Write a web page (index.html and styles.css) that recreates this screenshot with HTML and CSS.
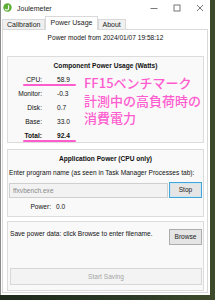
FILE: index.html
```html
<!DOCTYPE html>
<html>
<head>
<meta charset="utf-8">
<link rel="stylesheet" href="styles.css">
</head>
<body>
<div class="window">
  <div class="titlebar">
    <svg class="appicon" width="9" height="9" viewBox="0 0 9 9"><circle cx="4.5" cy="4.5" r="4.2" fill="#5fae3a"/><path d="M5.6 2.2 L5.6 5.2 Q5.6 7 3.9 7 Q2.6 7 2.4 5.8" fill="none" stroke="#fff" stroke-width="1.1"/></svg>
    <span class="title">Joulemeter</span>
    <div class="controls">
      <svg width="8" height="8" viewBox="0 0 8 8"><path d="M0.5 4.5 H7.5" stroke="#555" stroke-width="0.8"/></svg>
      <svg width="8" height="8" viewBox="0 0 8 8"><rect x="1" y="1" width="6" height="6" fill="none" stroke="#555" stroke-width="0.8"/></svg>
      <svg width="8" height="8" viewBox="0 0 8 8"><path d="M1 1 L7 7 M7 1 L1 7" stroke="#555" stroke-width="0.8"/></svg>
    </div>
  </div>
  <div class="tabs">
    <div class="tab">Calibration</div>
    <div class="tab active">Power Usage</div>
    <div class="tab">About</div>
  </div>
  <div class="page">
    <div class="model">Power model from 2024/01/07 19:58:12</div>
    <div class="group g1">
      <div class="heading">Component Power Usage (Watts)</div>
      <div class="rows">
        <div class="row mark"><span class="lbl">CPU:</span><span class="val">58.9</span></div>
        <div class="row"><span class="lbl">Monitor:</span><span class="val">-0.3</span></div>
        <div class="row"><span class="lbl">Disk:</span><span class="val">0.7</span></div>
        <div class="row"><span class="lbl">Base:</span><span class="val">33.0</span></div>
        <div class="row mark"><span class="lbl bold">Total:</span><span class="val bold">92.4</span></div>
      </div>
      <div class="note"><div>FF15ベンチマーク</div><div>計測中の高負荷時の</div><div>消費電力</div></div>
    </div>
    <div class="group g2">
      <div class="heading">Application Power (CPU only)</div>
      <div class="prompt">Enter program name (as seen in Task Manager Processes tab):</div>
      <div class="inputrow">
        <div class="input">ffxvbench.exe</div>
        <div class="btn focus">Stop</div>
      </div>
      <div class="power"><span class="plbl">Power:</span><span>0.0</span></div>
    </div>
    <div class="group g3">
      <div class="saverow">
        <div class="savetext">Save power data: click Browse to enter filename.</div>
        <div class="btn">Browse</div>
      </div>
      <div class="btn wide disabled">Start Saving</div>
    </div>
  </div>
</div>
</body>
</html>
```
FILE: styles.css
```css
html, body { margin: 0; padding: 0; }
body {
  width: 215px; height: 300px; overflow: hidden;
  background: linear-gradient(90deg, #1d2a1c 0%, #2b3a26 60%, #3d4a2a 100%);
  font-family: "Liberation Sans", Arial, sans-serif;
  font-size: 6.6px;
  color: #111;
}
.window {
  width: 210px; height: 295px;
  background: #ffffff;
  display: flex; flex-direction: column;
  box-sizing: border-box;
  border-left: 1px solid #8a8a8a;
}
.titlebar {
  height: 16px; display: flex; align-items: center;
  padding-left: 2px;
}
.appicon { margin-right: 5px; margin-top: -1px; }
.title { font-size: 7px; color: #222; }
.controls { margin-left: auto; display: flex; gap: 15px; margin-right: 6px; }
.tabs {
  height: 13px; display: flex; align-items: flex-end;
  padding-left: 1px; position: relative; z-index: 1;
}
.tab {
  height: 10px; line-height: 10px; padding: 0 4px;
  border: 1px solid #d9d9d9; border-bottom: none;
  background: #f0f0f0; color: #222;
  box-sizing: border-box; font-size: 7px;
}
.tab.active {
  height: 14px; line-height: 12px; background: #ffffff;
  margin-bottom: -1px; padding: 0 4px;
}
.page {
  flex: 1; margin: 0 2px 2px 1px;
  border: 1px solid #d9d9d9;
  background: #ffffff;
  display: flex; flex-direction: column;
  padding: 1px 3px 1px 4px;
}
.model { text-align: center; line-height: 13px; height: 13px; margin-bottom: 12px; }
.group {
  border: 1px solid #dcdcdc; background: #f9f9f9;
  position: relative;
}
.heading { text-align: center; font-weight: bold; line-height: 14px; }
.g1 { height: 87px; box-sizing: border-box; padding-top: 2px; }
.rows { display: flex; flex-direction: column; }
.row { display: flex; line-height: 14px; height: 14px; position: relative; }
.lbl { width: 34px; text-align: right; }
.val { margin-left: 15px; }
.bold { font-weight: bold; }
.row.mark::after {
  content: ""; position: absolute; left: 15px; width: 53px; top: 11px;
  height: 1.5px; background: #ff5ccf; border-radius: 1px;
}
.note {
  position: absolute; left: 76px; top: 17px;
  font-family: "Noto Sans CJK JP", sans-serif; font-weight: 500;
  font-size: 13px; color: #ff5ccf;
  white-space: nowrap;
}
.note div { height: 17.5px; line-height: 17.5px; }
.g2 { margin-top: 6px; height: 68px; box-sizing: border-box; padding: 2px 1px 0 1px; }
.prompt { line-height: 14px; white-space: nowrap; }
.inputrow { display: flex; gap: 1px; margin-top: 2px; align-items: center; }
.input {
  flex: 1; height: 15px; box-sizing: border-box;
  border: 1px solid #cfcfcf; background: #f2f2f2; color: #8a8a8a;
  line-height: 13px; padding-left: 3px;
}
.btn {
  width: 33px; height: 16px; box-sizing: border-box;
  border: 1px solid #adadad; background: #e5e5e5;
  text-align: center; line-height: 14px; color: #222;
}
.btn.focus { border: 1px solid #42a7d8; box-shadow: inset 0 0 0 1px #cfe6f2; }
.power { line-height: 14px; margin-top: 2px; display: flex; }
.plbl { width: 42px; text-align: right; margin-right: 5px; }
.g3 { margin-top: 4px; height: 70px; box-sizing: border-box; padding: 7px 1px 0 2px; display: flex; flex-direction: column; }
.saverow { display: flex; justify-content: space-between; align-items: flex-start; }
.savetext { line-height: 9px; }
.btn.wide { width: auto; margin-top: 23px; height: 17px; margin-left: 0; }
.btn.disabled { background: #f3f3f3; border-color: #d8d8d8; color: #a5a5a5; line-height: 15px; }
```
